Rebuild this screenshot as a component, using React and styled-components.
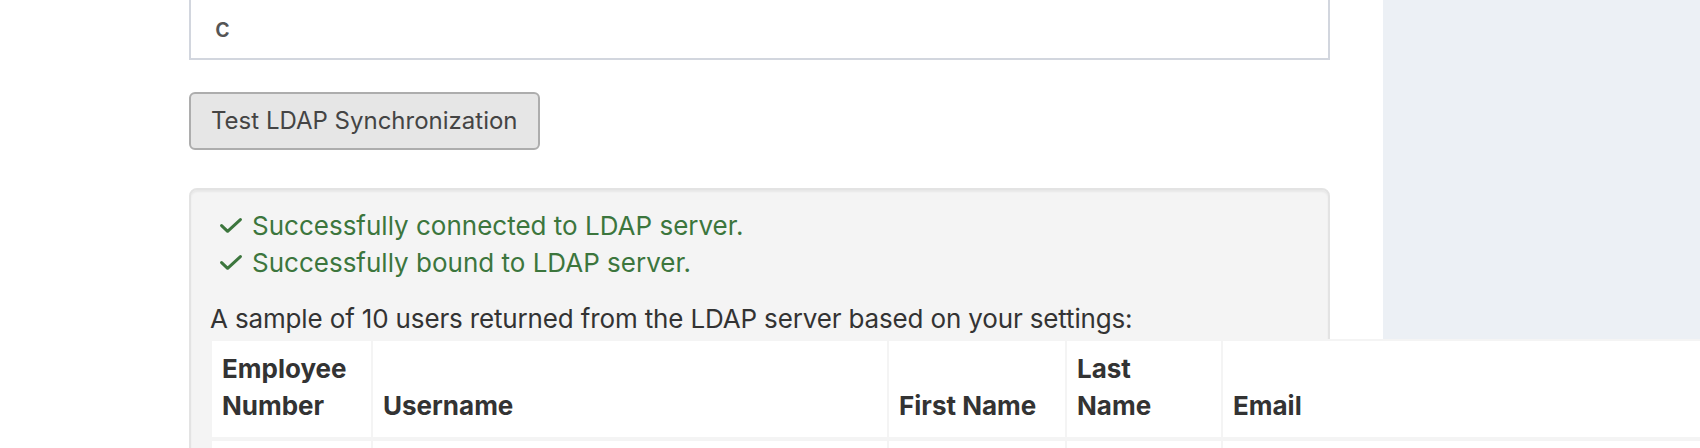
import React from "react"
import styled, { createGlobalStyle } from "styled-components"

const GlobalStyle = createGlobalStyle`
  html, body {
    margin: 0;
    padding: 0;
    overflow: hidden;
  }

  body {
    font-family: Inter, "Liberation Sans", sans-serif;
    color: #333;
    background: #ecf0f5;
  }
`

const columns = [
  { key: "employee", width: 161, label: ["Employee", "Number"] },
  { key: "username", width: 516, label: ["Username"] },
  { key: "first", width: 178, label: ["First Name"] },
  { key: "last", width: 156, label: ["Last", "Name"] },
  { key: "email", width: 560, label: ["Email"] },
]

const messages = [
  "Successfully connected to LDAP server.",
  "Successfully bound to LDAP server.",
]

const CheckIcon = () => (
  <CheckSvg viewBox="0 0 22 15" aria-hidden="true">
    <path d="M1.6 7.6 L7.6 13.3 L20.4 1.6" />
  </CheckSvg>
)

const App = () => (
  <Page>
    <GlobalStyle />
    <Box>
      <Field>c</Field>

      <Button type="button">Test LDAP Synchronization</Button>

      <Well>
        <CheckList>
          {messages.map(msg => (
            <CheckItem key={msg}>
              <CheckIcon />
              {msg}
            </CheckItem>
          ))}
        </CheckList>

        <Intro>
          A sample of 10 users returned from the LDAP server based on your
          settings:
        </Intro>

        <Table>
          <colgroup>
            {columns.map(col => (
              <Col key={col.key} $w={col.width} />
            ))}
          </colgroup>
          <thead>
            <tr>
              {columns.map(col => (
                <Th key={col.key}>
                  {col.label.map((line, i) => (
                    <React.Fragment key={line}>
                      {i > 0 && <br />}
                      {line}
                    </React.Fragment>
                  ))}
                </Th>
              ))}
            </tr>
          </thead>
          <tbody>
            <tr>
              {columns.map(col => (
                <Td key={col.key} />
              ))}
            </tr>
          </tbody>
        </Table>
      </Well>
    </Box>
  </Page>
)

export default App

const Page = styled.div`
  width: 1700px;
  height: 448px;
  overflow: hidden;
  background: #ecf0f5;
`

const Box = styled.div`
  width: 1383px;
  min-height: 470px;
  box-sizing: border-box;
  padding: 0 53px 0 189px;
  background: #fff;
`

const Field = styled.div`
  margin-top: -8px;
  height: 68px;
  box-sizing: border-box;
  border: 2px solid #d2d6de;
  padding: 14px 24px 10px;
  font-size: 26px;
  line-height: 40px;
  font-weight: 500;
  color: #555;
  background: #fff;
`

const Button = styled.button`
  display: block;
  margin-top: 32px;
  padding: 10px 20px;
  font-family: inherit;
  font-size: 24px;
  line-height: 34px;
  color: #444;
  background: #e6e6e6;
  border: 2px solid #adadad;
  border-radius: 6px;
`

const Well = styled.div`
  margin-top: 38px;
  padding: 17px 19px 60px;
  font-size: 26px;
  line-height: 37px;
  background: #f4f4f4;
  border: 2px solid #e3e3e3;
  border-radius: 8px;
  box-shadow: inset 0 2px 2px rgba(0, 0, 0, 0.05);
`

const CheckList = styled.ul`
  margin: 0 0 19px;
  padding: 0 0 0 10px;
  list-style: none;
  color: #3c763d;
`

const CheckItem = styled.li`
  display: flex;
  align-items: center;
  gap: 10px;
`

const CheckSvg = styled.svg`
  width: 22px;
  height: 15px;
  flex: none;
  fill: none;
  stroke: #3c763d;
  stroke-width: 3;
  stroke-linecap: round;
  stroke-linejoin: round;
`

const Intro = styled.p`
  margin: 0 0 2px;
  letter-spacing: -0.15px;
`

const Table = styled.table`
  table-layout: fixed;
  width: 1571px;
  border-collapse: collapse;
  background: #fff;
`

const Col = styled.col`
  width: ${({ $w }) => $w}px;
`

const Th = styled.th`
  padding: 9px 10px 13px;
  text-align: left;
  vertical-align: bottom;
  font-size: 26px;
  line-height: 37px;
  font-weight: 700;
  color: #333;
  border: 2px solid #f4f4f4;
  border-bottom-width: 4px;
`

const Td = styled.td`
  height: 60px;
  border: 2px solid #f4f4f4;
`
